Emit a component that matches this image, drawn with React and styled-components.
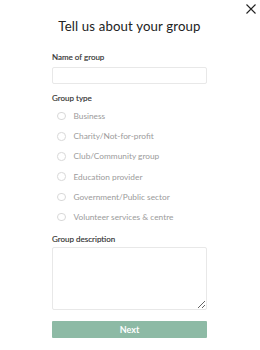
import React from "react";
import styled, { createGlobalStyle } from "styled-components";

const Global = createGlobalStyle`
  html, body { margin: 0; padding: 0; background: #fff; }
  body { font-family: Lato, "Noto Sans", sans-serif; }
  * { box-sizing: border-box; }
`;

const Page = styled.div`
  position: relative;
  width: 260px;
  height: 350px;
  padding: 16px 53px 0 52px;
  display: flex;
  flex-direction: column;
`;

const Close = styled.button`
  position: absolute;
  top: 4px;
  right: 4px;
  width: 10px;
  height: 10px;
  padding: 0;
  border: 0;
  background: none;
  display: flex;
`;

const Title = styled.h1`
  margin: 0;
  font-size: 13.2px;
  line-height: 20px;
  font-weight: 400;
  color: #222;
  text-align: center;
  letter-spacing: 0.15px;
`;

const Label = styled.div`
  margin-top: ${(p) => p.$mt}px;
  font-size: 8px;
  line-height: 12px;
  font-weight: 400;
  color: #333;
  -webkit-text-stroke: 0.15px #333;
`;

const Input = styled.input`
  margin-top: 4px;
  width: 100%;
  height: 17px;
  border: 1px solid #e8e8e8;
  border-radius: 2px;
  outline: none;
`;

const RadioList = styled.div`
  margin-top: 2px;
  display: flex;
  flex-direction: column;
`;

const RadioRow = styled.label`
  height: 20.2px;
  display: flex;
  align-items: center;
  padding-left: 5px;
  gap: 8px;
  font-size: 8.3px;
  color: #9b9b9b;
`;

const Circle = styled.span`
  width: 8.5px;
  height: 8.5px;
  border-radius: 50%;
  border: 1px solid #d8d8d8;
  flex: none;
`;

const TextArea = styled.textarea`
  margin-top: 2px;
  width: 100%;
  height: 63px;
  border: 1px solid #e8e8e8;
  border-radius: 2px;
  outline: none;
  resize: vertical;
`;

const Button = styled.button`
  margin-top: 11px;
  width: 100%;
  height: 17px;
  border: 0;
  border-radius: 1px;
  background: #8dbaa5;
  color: #fff;
  font-family: Lato, "Noto Sans", sans-serif;
  font-size: 9px;
  font-weight: 700;
  padding: 0;
`;

const types = [
  "Business",
  "Charity/Not-for-profit",
  "Club/Community group",
  "Education provider",
  "Government/Public sector",
  "Volunteer services & centre",
];

export default function App() {
  return (
    <>
      <Global />
      <Page>
        <Close aria-label="Close">
          <svg width="10" height="10" viewBox="0 0 10 10">
            <path d="M0.5 0.5 L9.5 9.5 M9.5 0.5 L0.5 9.5" stroke="#222" strokeWidth="1.1" />
          </svg>
        </Close>
        <Title>Tell us about your group</Title>
        <Label $mt={15}>Name of group</Label>
        <Input />
        <Label $mt={8}>Group type</Label>
        <RadioList>
          {types.map((t) => (
            <RadioRow key={t}>
              <Circle />
              {t}
            </RadioRow>
          ))}
        </RadioList>
        <Label $mt={6}>Group description</Label>
        <TextArea />
        <Button>Next</Button>
      </Page>
    </>
  );
}
